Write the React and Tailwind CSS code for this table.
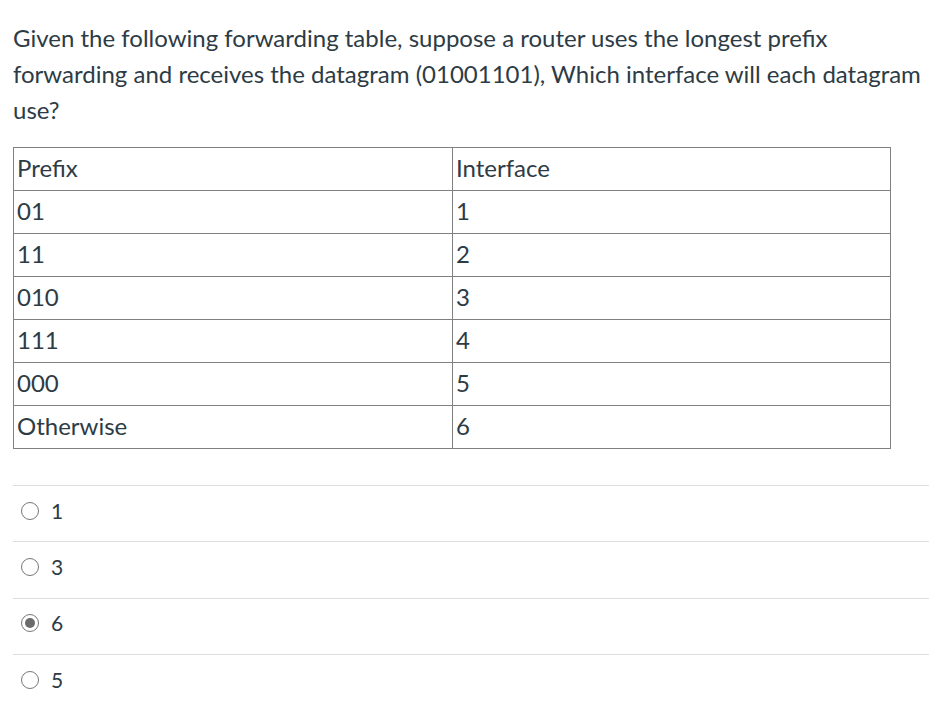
import React from 'react';

const rows = [
  ['01', '1'],
  ['11', '2'],
  ['010', '3'],
  ['111', '4'],
  ['000', '5'],
  ['Otherwise', '6'],
];

const answers = [
  { label: '1', checked: false },
  { label: '3', checked: false },
  { label: '6', checked: true },
  { label: '5', checked: false },
];

const Radio = ({ checked }) => (
  <span className="w-[18px] h-[18px] rounded-full border border-[#777] bg-white flex items-center justify-center shrink-0">
    {checked && <span className="w-[10px] h-[10px] rounded-full bg-[#6b6b6b]" />}
  </span>
);

export default function App() {
  return (
    <div className="bg-white min-h-[722px] pl-[13px] pr-[11px] pt-[20px] text-[#2d3b45] font-['Lato','Open_Sans',sans-serif]">
      {/* Question */}
      <p className="text-[24px] leading-[36px]">
        Given the following forwarding table, suppose a router uses the longest prefix forwarding and receives the datagram (01001101), Which interface will each datagram use?
      </p>

      {/* Table */}
      <table className="mt-[19px] w-[878px] border-collapse text-[24px] leading-[28px]">
        <tbody>
          <tr className="h-[43px]">
            <td className="border border-[#808080] px-[3px] pb-[3px] w-[439px]">Prefix</td>
            <td className="border border-[#808080] px-[3px] pb-[3px]">Interface</td>
          </tr>
          {rows.map(([p, i]) => (
            <tr key={p} className="h-[43px]">
              <td className="border border-[#808080] px-[3px] pb-[3px]">{p}</td>
              <td className="border border-[#808080] px-[3px] pb-[3px]">{i}</td>
            </tr>
          ))}
        </tbody>
      </table>

      {/* Answers */}
      <div className="mt-[36px] w-[916px]">
        {answers.map((a) => (
          <div key={a.label} className="h-[56.4px] border-t border-[#dddddd] flex items-center gap-[12px] pl-[8px] pb-[6px]">
            <Radio checked={a.checked} />
            <span className="text-[21px] leading-[26px]">{a.label}</span>
          </div>
        ))}
      </div>
    </div>
  );
}
